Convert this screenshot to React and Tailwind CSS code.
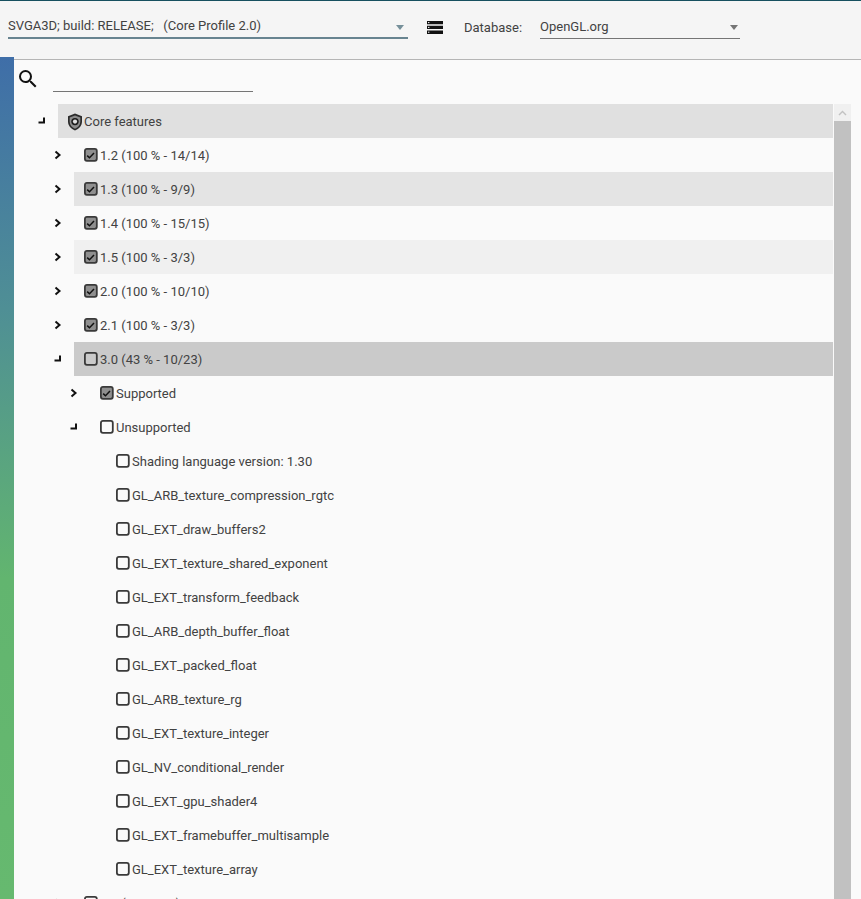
import React from 'react';

const features = [
  'Shading language version: 1.30',
  'GL_ARB_texture_compression_rgtc',
  'GL_EXT_draw_buffers2',
  'GL_EXT_texture_shared_exponent',
  'GL_EXT_transform_feedback',
  'GL_ARB_depth_buffer_float',
  'GL_EXT_packed_float',
  'GL_ARB_texture_rg',
  'GL_EXT_texture_integer',
  'GL_NV_conditional_render',
  'GL_EXT_gpu_shader4',
  'GL_EXT_framebuffer_multisample',
  'GL_EXT_texture_array',
];

function Checkbox({ checked }) {
  return (
    <svg width="16" height="16" viewBox="0 0 16 16" className="shrink-0">
      <rect x="0.9" y="1.9" width="11.9" height="11.9" rx="2" fill={checked ? '#8f8f8f' : 'none'} stroke="#3a3a3a" strokeWidth="1.8" />
      {checked && <path d="M3.2 8.6 L5.5 10.8 L10 5.9" fill="none" stroke="#111" strokeWidth="1.5" />}
    </svg>
  );
}

function Expander({ open }) {
  return (
    <svg width="10" height="10" viewBox="0 0 10 10" className="shrink-0">
      {open ? (
        <path d="M1.5 6.5 H7 V1.5" fill="none" stroke="#111" strokeWidth="2" />
      ) : (
        <path d="M2.5 1.5 L6.5 5 L2.5 8.5" fill="none" stroke="#111" strokeWidth="2" />
      )}
    </svg>
  );
}

// indent is the left of the row background, the expander sits 16px before it
function Row({ indent, open, expander, bg, icon, checked, children }) {
  return (
    <div className="flex h-[34px] items-center">
      <div className="flex h-full w-[16px] shrink-0 items-center" style={{ marginLeft: indent - 21 }}>
        {expander && <Expander open={open} />}
      </div>
      <div className={`ml-[5px] flex h-full flex-1 items-center pl-[10px] ${bg || ''}`}>
        {icon || <Checkbox checked={checked} />}
        <span className="mt-[2px] whitespace-nowrap">{children}</span>
      </div>
    </div>
  );
}

export default function App() {
  return (
    <div className="flex h-[899px] w-[861px] flex-col overflow-hidden bg-[#fafafa] font-['Roboto',sans-serif] text-[13px] text-[#424242]">
      <header className="flex h-[60px] shrink-0 items-start border-t border-t-[#17505f] border-b border-b-[#b5b5b5] bg-[#f5f5f5] pt-[12px] pl-[8px]">
        <div className="flex h-[26px] w-[400px] items-center justify-between border-b-2 border-[#688490] pr-[3px]">
          <span className="whitespace-pre pt-[2px]">SVGA3D; build: RELEASE;   (Core Profile 2.0)</span>
          <span className="mt-[4px] mr-[1px] h-0 w-0 border-x-[4px] border-t-[5px] border-x-transparent border-t-[#76909a]" />
        </div>
        <svg width="16" height="13" viewBox="0 0 16 13" className="mt-[8px] ml-[19px]">
          <path d="M0 0H16V3.2H0ZM0 4.8H16V8H0ZM0 9.6H16V13H0Z" fill="#111" />
          <path d="M1 1.6H2.4M1 6.4H2.4M1 11.2H2.4" stroke="#fff" strokeWidth="1" />
        </svg>
        <span className="mt-[5px] ml-[21px] w-[76px]">Database:</span>
        <div className="flex h-[26px] w-[200px] items-center justify-between border-b border-[#757575] pr-[1px]">
          <span className="pt-[2px]">OpenGL.org</span>
          <span className="mt-[4px] mr-[1px] h-0 w-0 border-x-[4px] border-t-[5px] border-x-transparent border-t-[#757575]" />
        </div>
      </header>
      <div className="flex min-h-0 flex-1">
        <div className="relative mt-[-3px] w-[14px] shrink-0 bg-[linear-gradient(180deg,#3f6ea8_0%,#4f8f95_30%,#62b56f_62%,#66b96f_100%)]" />
        <main className="min-w-0 flex-1">
          <div className="flex h-[44px] items-start pt-[7px] pl-[2px]">
            <svg width="24" height="24" viewBox="0 0 24 24" className="shrink-0">
              <path fill="#111" d="M15.5 14h-.79l-.28-.27A6.47 6.47 0 0 0 16 9.5 6.5 6.5 0 1 0 9.5 16c1.61 0 3.09-.59 4.23-1.57l.27.28v.79l5 4.99L20.49 19l-4.99-5zm-6 0C7.01 14 5 11.99 5 9.5S7.01 5 9.5 5 14 7.01 14 9.5 11.99 14 9.5 14z" />
            </svg>
            <div className="mt-[5px] ml-[13px] h-[20px] w-[200px] border-b border-[#757575]" />
          </div>
          <div className="flex">
            <div className="w-[819px] shrink-0">
              <Row indent={44} open expander bg="bg-[#e0e0e0]" icon={
                <svg width="16" height="18" viewBox="0 0 16 18" className="mt-[1px] mr-[1px] ml-[-1px] shrink-0">
                  <path d="M8 0.6 L15 3.2 V8.6 C15 12.8 12 15.9 8 17.4 C4 15.9 1 12.8 1 8.6 V3.2 Z" fill="#2b2b2b" />
                  <path d="M8 2.6 L13.3 4.6 V8.7 C13.3 11.7 11.2 14.4 8 15.7 C4.8 14.4 2.7 11.7 2.7 8.7 V4.6 Z" fill="#8c8c8c" />
                  <circle cx="8" cy="8.6" r="3.7" fill="#1c1c1c" />
                  <circle cx="8" cy="8.6" r="2.1" fill="#e0e0e0" />
                </svg>
              }>Core features</Row>
              <Row indent={60} expander checked>1.2 (100 % - 14/14)</Row>
              <Row indent={60} expander checked bg="bg-[#e4e4e4]">1.3 (100 % - 9/9)</Row>
              <Row indent={60} expander checked>1.4 (100 % - 15/15)</Row>
              <Row indent={60} expander checked bg="bg-[#f0f0f0]">1.5 (100 % - 3/3)</Row>
              <Row indent={60} expander checked>2.0 (100 % - 10/10)</Row>
              <Row indent={60} expander checked>2.1 (100 % - 3/3)</Row>
              <Row indent={60} open expander bg="bg-[#cacaca]">3.0 (43 % - 10/23)</Row>
              <Row indent={76} expander checked>Supported</Row>
              <Row indent={76} open expander>Unsupported</Row>
              {features.map((f) => (
                <Row key={f} indent={92}>{f}</Row>
              ))}
              <Row indent={60} expander>3.1 (0 % - 0/8)</Row>
            </div>
            <div className="ml-[1px] w-[17px] shrink-0">
              <div className="flex h-[17px] items-center justify-center bg-[#f0f0f0]">
                <svg width="9" height="6" viewBox="0 0 9 6"><path d="M1 5 L4.5 1.5 L8 5" fill="none" stroke="#c2c2c2" strokeWidth="1.4" /></svg>
              </div>
              <div className="h-[800px] bg-[#c1c1c1]" />
            </div>
          </div>
        </main>
      </div>
    </div>
  );
}
